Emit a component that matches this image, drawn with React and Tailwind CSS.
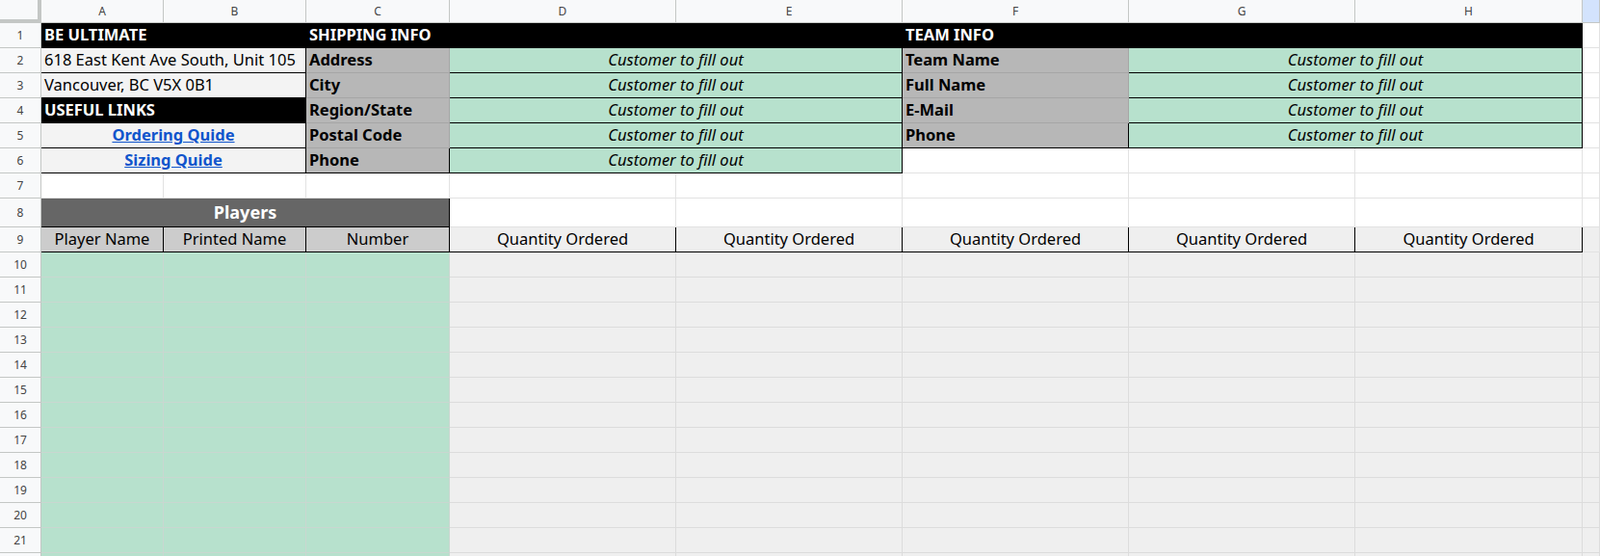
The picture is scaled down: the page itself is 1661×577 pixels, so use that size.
const W = [127, 148, 149, 235, 235, 235, 235, 236, 18];
const sum = (a, b) => W.slice(a, b + 1).reduce((x, y) => x + y, 0);

function C({ a, b = a, cls = "", bc = "border-[#e2e2e2]", children }) {
  return (
    <div
      style={{ width: sum(a, b) }}
      className={`shrink-0 h-full border-r border-b box-border flex items-center overflow-hidden whitespace-nowrap px-[3px] ${bc} ${cls}`}
    >
      {children}
    </div>
  );
}

function Row({ n, tall, children }) {
  return (
    <div className={`flex ${tall ? "h-[30px]" : "h-[26px]"}`}>
      <div className="w-[43px] shrink-0 h-full bg-[#f8f9fa] border-r border-b border-[#c4c7c5] box-border text-[12px] text-[#444] flex items-center justify-center">
        {n}
      </div>
      {children}
    </div>
  );
}

const blk = "bg-black text-white font-bold";
const gry = "bg-[#b7b7b7] font-bold";
const grn = "bg-[#b7e1cd] italic justify-center";
const B = "border-black";
const fill = "Customer to fill out";

export default function App() {
  const letters = ["A", "B", "C", "D", "E", "F", "G", "H", ""];
  return (
    <div className="w-[1661px] h-[577px] overflow-hidden bg-white text-[16.5px] text-black font-['Liberation_Sans',Arial,sans-serif]">
      <div className="flex h-[24px]">
        <div className="w-[43px] shrink-0 bg-[#f8f9fa] border-r-4 border-b-4 border-[#c4c7c5] box-border" />
        {letters.map((l, i) => (
          <div key={i} style={{ width: W[i] }} className={`shrink-0 h-full border-r border-b border-[#c4c7c5] box-border text-[12px] text-[#444] flex items-center justify-center ${i === 8 ? "bg-[#d3e3fd]" : "bg-[#f8f9fa]"}`}>
            {l}
          </div>
        ))}
      </div>
      <Row n={1}>
        <C a={0} b={1} cls={blk} bc={B}>BE ULTIMATE</C>
        <C a={2} b={4} cls={blk} bc={B}>SHIPPING INFO</C>
        <C a={5} b={7} cls={blk} bc={B}>TEAM INFO</C>
        <C a={8} />
      </Row>
      <Row n={2}>
        <C a={0} b={1} cls="bg-[#f3f3f3]" bc={B}>618 East Kent Ave South, Unit 105</C>
        <C a={2} cls={gry} bc="border-[#a6a6a6]">Address</C>
        <C a={3} b={4} cls={grn} bc={B}>{fill}</C>
        <C a={5} cls={gry} bc="border-[#a6a6a6]">Team Name</C>
        <C a={6} b={7} cls={grn} bc={B}>{fill}</C>
        <C a={8} />
      </Row>
      <Row n={3}>
        <C a={0} b={1} cls="bg-[#f3f3f3]" bc={B}>Vancouver, BC V5X 0B1</C>
        <C a={2} cls={gry} bc="border-[#a6a6a6]">City</C>
        <C a={3} b={4} cls={grn} bc={B}>{fill}</C>
        <C a={5} cls={gry} bc="border-[#a6a6a6]">Full Name</C>
        <C a={6} b={7} cls={grn} bc={B}>{fill}</C>
        <C a={8} />
      </Row>
      <Row n={4}>
        <C a={0} b={1} cls={blk} bc={B}>USEFUL LINKS</C>
        <C a={2} cls={gry} bc="border-[#a6a6a6]">Region/State</C>
        <C a={3} b={4} cls={grn} bc={B}>{fill}</C>
        <C a={5} cls={gry} bc="border-[#a6a6a6]">E-Mail</C>
        <C a={6} b={7} cls={grn} bc={B}>{fill}</C>
        <C a={8} />
      </Row>
      <Row n={5}>
        <C a={0} b={1} cls="bg-[#f3f3f3] justify-center font-bold text-[#1155cc] underline" bc={B}>Ordering Quide</C>
        <C a={2} cls={gry} bc="border-[#a6a6a6]">Postal Code</C>
        <C a={3} b={4} cls={grn} bc={B}>{fill}</C>
        <C a={5} cls={gry} bc={B}>Phone</C>
        <C a={6} b={7} cls={grn} bc={B}>{fill}</C>
        <C a={8} />
      </Row>
      <Row n={6}>
        <C a={0} b={1} cls="bg-[#f3f3f3] justify-center font-bold text-[#1155cc] underline" bc={B}>Sizing Quide</C>
        <C a={2} cls={gry} bc={B}>Phone</C>
        <C a={3} b={4} cls={grn} bc={B}>{fill}</C>
        <C a={5} /><C a={6} /><C a={7} /><C a={8} />
      </Row>
      <Row n={7}>
        <C a={0} /><C a={1} /><C a={2} /><C a={3} /><C a={4} /><C a={5} /><C a={6} /><C a={7} /><C a={8} />
      </Row>
      <Row n={8} tall>
        <C a={0} b={2} cls="bg-[#666666] text-white font-bold text-[18px] justify-center" bc={B}>Players</C>
        <C a={3} /><C a={4} /><C a={5} /><C a={6} /><C a={7} /><C a={8} />
      </Row>
      <Row n={9}>
        <C a={0} cls="bg-[#cccccc] justify-center" bc={B}>Player Name</C>
        <C a={1} cls="bg-[#cccccc] justify-center" bc={B}>Printed Name</C>
        <C a={2} cls="bg-[#cccccc] justify-center" bc={B}>Number</C>
        {[3, 4, 5, 6, 7].map((i) => (
          <C key={i} a={i} cls="bg-[#efefef] justify-center" bc={B}>Quantity Ordered</C>
        ))}
        <C a={8} cls="bg-[#efefef]" />
      </Row>
      {Array.from({ length: 13 }, (_, k) => k + 10).map((n) => (
        <Row key={n} n={n < 22 ? n : ""}>
          {[0, 1, 2].map((i) => <C key={i} a={i} cls="bg-[#b7e1cd]" bc="border-[#c9d7d0]" />)}
          {[3, 4, 5, 6, 7, 8].map((i) => <C key={i} a={i} cls="bg-[#efefef]" bc="border-[#dcdcdc]" />)}
        </Row>
      ))}
    </div>
  );
}
